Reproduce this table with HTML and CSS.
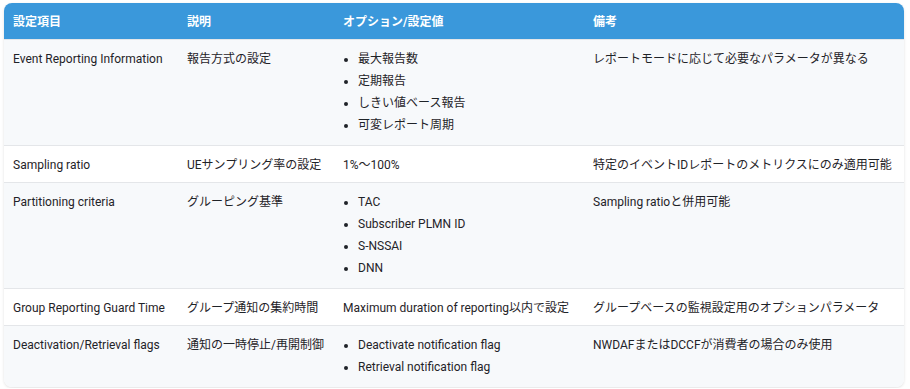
FILE: index.html
```html
<!DOCTYPE html>
<html lang="ja">
<head>
<meta charset="utf-8">
<title>設定項目</title>
<link rel="stylesheet" href="styles.css">
</head>
<body>
<div class="wrap">
<table class="spec">
<colgroup>
<col class="c1"><col class="c2"><col class="c3"><col class="c4">
</colgroup>
<thead>
<tr><th>設定項目</th><th>説明</th><th>オプション/設定値</th><th>備考</th></tr>
</thead>
<tbody>
<tr class="alt">
<td>Event Reporting Information</td>
<td>報告方式の設定</td>
<td><ul><li>最大報告数</li><li>定期報告</li><li>しきい値ベース報告</li><li>可変レポート周期</li></ul></td>
<td>レポートモードに応じて必要なパラメータが異なる</td>
</tr>
<tr>
<td>Sampling ratio</td>
<td>UEサンプリング率の設定</td>
<td>1%～100%</td>
<td>特定のイベントIDレポートのメトリクスにのみ適用可能</td>
</tr>
<tr class="alt">
<td>Partitioning criteria</td>
<td>グルーピング基準</td>
<td><ul><li>TAC</li><li>Subscriber PLMN ID</li><li>S-NSSAI</li><li>DNN</li></ul></td>
<td>Sampling ratioと併用可能</td>
</tr>
<tr>
<td>Group Reporting Guard Time</td>
<td>グループ通知の集約時間</td>
<td>Maximum duration of reporting以内で設定</td>
<td>グループベースの監視設定用のオプションパラメータ</td>
</tr>
<tr class="alt">
<td>Deactivation/Retrieval flags</td>
<td>通知の一時停止/再開制御</td>
<td><ul><li>Deactivate notification flag</li><li>Retrieval notification flag</li></ul></td>
<td>NWDAFまたはDCCFが消費者の場合のみ使用</td>
</tr>
</tbody>
</table>
</div>
</body>
</html>
```
FILE: styles.css
```css
html, body {
  margin: 0;
  padding: 0;
  background: #ffffff;
}
body {
  padding: 3px 6px 1px 4px;
  font-family: Roboto, "Noto Sans CJK JP", sans-serif;
  font-size: 12px;
  color: #1f2328;
}
.wrap {
  width: 900px;
  border-radius: 8px;
  overflow: hidden;
  box-shadow: 0 1px 3px rgba(0, 0, 0, 0.12);
}
.spec {
  width: 900px;
  border-collapse: collapse;
  table-layout: fixed;
}
.c1 { width: 174px; }
.c2 { width: 156px; }
.c3 { width: 250px; }
.c4 { width: 320px; }
.spec th {
  background: #3a98db;
  color: #ffffff;
  font-weight: 700;
  text-align: left;
  padding: 11px 9px 9px;
  line-height: 16px;
}
.spec td {
  padding: 11px 9px 8px;
  line-height: 17px;
  vertical-align: top;
  border-top: 1px solid #e4e6e9;
  background: #ffffff;
  white-space: nowrap;
}
.spec tr.alt td {
  background: #f7f9fb;
}
.spec ul {
  margin: 0 0 3px;
  padding-left: 15px;
}
.spec li {
  line-height: 17px;
}
.spec li + li {
  margin-top: 5px;
}
```
